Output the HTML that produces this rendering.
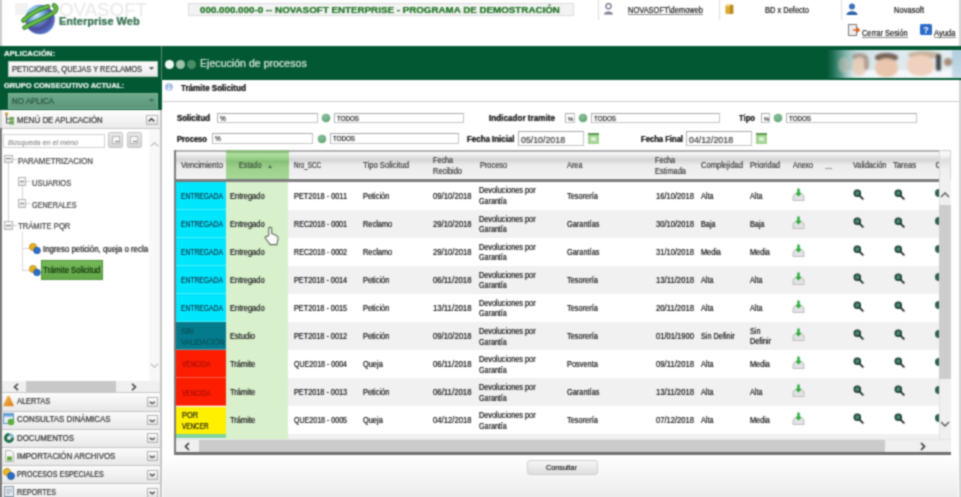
<!DOCTYPE html>
<html><head><meta charset="utf-8"><title>Novasoft</title>
<style>
*{box-sizing:border-box;margin:0;padding:0}
html,body{width:961px;height:497px;overflow:hidden;background:#fff;font-family:"Liberation Sans",sans-serif;color:#333}
.ab{position:absolute}
.t{position:absolute;white-space:nowrap;line-height:1;text-shadow:0 0 0.7px}
</style></head><body>
<svg width="0" height="0" style="position:absolute"><filter id="soft" x="0" y="0" width="100%" height="100%" color-interpolation-filters="sRGB"><feConvolveMatrix order="5" kernelMatrix="0.0002 0.0033 0.0081 0.0033 0.0002 0.0033 0.048 0.117 0.048 0.0033 0.0081 0.117 0.284 0.117 0.0081 0.0033 0.048 0.117 0.048 0.0033 0.0002 0.0033 0.0081 0.0033 0.0002" edgeMode="duplicate"/></filter></svg>
<div id="root" style="position:absolute;left:0;top:0;width:961px;height:497px;overflow:hidden;background:#fff;filter:url(#soft)">

<div class="ab" style="left:0;top:0;width:961px;height:46px;background:#fff"></div>
<div class="ab" style="left:0;top:0;width:1.5px;height:46px;background:#cfcfcf"></div>
<div class="ab" style="left:15px;top:3px;width:13px;height:12px;background:#f2f2f2"></div>
<svg class="ab" style="left:15px;top:0px" width="50" height="40" viewBox="0 0 50 40">
<defs><radialGradient id="gl" cx="0.35" cy="0.3" r="0.8"><stop offset="0" stop-color="#e8f4fc"/><stop offset="0.3" stop-color="#7ab4e4"/><stop offset="0.65" stop-color="#4a4a9c"/><stop offset="0.9" stop-color="#5a78c8"/><stop offset="1" stop-color="#9ad0f0"/></radialGradient></defs>
<circle cx="25" cy="19.5" r="14.8" fill="url(#gl)"/>
<path d="M8.5 20.5 C14 15 24 9 33 6.5" stroke="#2e7a22" stroke-width="4.6" fill="none" stroke-linecap="round"/>
<path d="M8.5 20.5 C14 15 24 9 33 6.5" stroke="#6cc04a" stroke-width="2.6" fill="none" stroke-linecap="round"/>
<path d="M9.5 27.5 C18 23 33 17 40 11.5 C42 9 41.5 6.5 39 5.5" stroke="#2e7a22" stroke-width="4.6" fill="none" stroke-linecap="round"/>
<path d="M9.5 27.5 C18 23 33 17 40 11.5 C42 9 41.5 6.5 39 5.5" stroke="#6cc04a" stroke-width="2.6" fill="none" stroke-linecap="round"/>
</svg>
<div class="ab" style="left:188px;top:3px;width:386px;height:13px;background:#f3f3f3;border:1px solid #dcdcdc"></div>
<div class="ab" style="left:598px;top:0;width:1px;height:20px;background:#dcdcdc"></div>
<div class="ab" style="left:719px;top:0;width:1px;height:20px;background:#dcdcdc"></div>
<div class="ab" style="left:841px;top:0;width:1px;height:20px;background:#dcdcdc"></div>
<svg class="ab" style="left:603px;top:3px" width="11" height="12" viewBox="0 0 11 12">
<circle cx="5.5" cy="3.2" r="2.6" fill="none" stroke="#6a6a80" stroke-width="1.3"/>
<path d="M1 11.5 C1 7.5 10 7.5 10 11.5 Z" fill="#7a7a90"/></svg>
<svg class="ab" style="left:725px;top:4px" width="9" height="11" viewBox="0 0 9 11">
<rect x="0.5" y="1" width="8" height="9" rx="1" fill="#d8a830"/><ellipse cx="4.5" cy="1.5" rx="4" ry="1.3" fill="#f0d070"/><rect x="5" y="1" width="3" height="9" fill="#b88820"/></svg>
<svg class="ab" style="left:846px;top:3px" width="12" height="12" viewBox="0 0 12 12">
<circle cx="6" cy="3.5" r="3" fill="#3a70b8"/><path d="M0.5 12 C0.5 7 11.5 7 11.5 12 Z" fill="#2a60a8"/></svg>
<svg class="ab" style="left:848px;top:24px" width="12" height="12" viewBox="0 0 12 12">
<rect x="0.5" y="0.5" width="8" height="11" fill="#eee" stroke="#777"/><path d="M5 6 H11 M8.5 3.5 L11 6 L8.5 8.5" stroke="#e06020" stroke-width="1.6" fill="none"/></svg>
<svg class="ab" style="left:920px;top:24px" width="12" height="11" viewBox="0 0 12 11">
<rect x="0" y="0" width="12" height="11" rx="1.5" fill="#2a6cc8"/><text x="6" y="9" font-size="9" font-family="Liberation Sans" font-weight="bold" fill="#fff" text-anchor="middle">?</text></svg>
<div class="ab" style="left:0;top:46px;width:161px;height:64px;background:#035834"></div>
<div class="ab" style="left:162px;top:46px;width:799px;height:34px;background:#035834"></div>
<div class="ab" style="left:826.5px;top:49.5px;width:134.5px;height:28px;overflow:hidden;background:linear-gradient(90deg,#035834 0px,#1a6a4c 5px,#4a9080 12px,#90bcb8 20px,#c8dee0 30px,#dce8ee 50px,#e4eef2 100%)">
<div class="ab" style="left:0;top:0;width:135px;height:28px;filter:blur(1.3px)">
<div class="ab" style="left:0;top:20px;width:135px;height:8px;background:linear-gradient(90deg,rgba(255,255,255,0) 15px,rgba(246,248,250,0.95) 35px)"></div>
<div class="ab" style="left:11px;top:7px;width:12px;height:16px;border-radius:50%;background:rgba(214,196,182,0.45)"></div>
<div class="ab" style="left:25px;top:3px;width:15px;height:7px;border-radius:50%;background:rgba(150,115,90,0.6)"></div>
<div class="ab" style="left:25px;top:7px;width:15px;height:19px;border-radius:50%;background:rgba(232,204,184,0.9)"></div>
<div class="ab" style="left:37px;top:6px;width:5px;height:14px;border-radius:40%;background:rgba(140,100,80,0.5)"></div>
<div class="ab" style="left:48px;top:3px;width:23px;height:8px;border-radius:50% 50% 35% 35%;background:rgba(96,72,58,0.85)"></div>
<div class="ab" style="left:48px;top:8px;width:23px;height:19px;border-radius:45%;background:rgba(234,196,170,0.95)"></div>
<div class="ab" style="left:81px;top:1px;width:32px;height:8px;border-radius:50%;background:rgba(190,160,130,0.75)"></div>
<div class="ab" style="left:80px;top:5px;width:27px;height:21px;border-radius:45%;background:rgba(240,208,188,0.95)"></div>
<div class="ab" style="left:109.5px;top:4px;width:4.5px;height:17px;border-radius:3px;background:rgba(40,40,44,0.85)"></div>
<div class="ab" style="left:117px;top:8px;width:8px;height:8px;border-radius:50%;background:rgba(150,115,90,0.8)"></div>
<div class="ab" style="left:125px;top:0;width:12px;height:28px;background:linear-gradient(#b0ccdc,#c8dce8)"></div>
</div></div>
<div class="ab" style="left:826.5px;top:77.5px;width:134.5px;height:2.5px;background:#035834"></div>
<div class="ab" style="left:165px;top:59.5px;width:9px;height:9px;border-radius:50%;background:#f4f8f4"></div>
<div class="ab" style="left:176px;top:59.5px;width:9px;height:9px;border-radius:50%;background:#9ec4ac"></div>
<div class="ab" style="left:187px;top:59.5px;width:9px;height:9px;border-radius:50%;background:#4a8c66"></div>
<div class="ab" style="left:8px;top:60.5px;width:149.5px;height:16px;background:linear-gradient(#fbfbfb,#eaeaea);border:1px solid #b8ccc0"></div>
<svg class="ab" style="left:149.3px;top:66.6px" width="5" height="3" viewBox="0 0 5 3"><path d="M0 0 H5 L2.5 3Z" fill="#555"/></svg>
<div class="ab" style="left:8px;top:92.5px;width:149.5px;height:16px;background:linear-gradient(#6ea98a,#5b9679);border:1px solid #82b49a"></div>
<svg class="ab" style="left:149.3px;top:98.8px" width="5" height="3" viewBox="0 0 5 3"><path d="M0 0 H5 L2.5 3Z" fill="#3a6a50"/></svg>
<div class="ab" style="left:160.5px;top:46px;width:1.6px;height:64px;background:#035834"></div>
<div class="ab" style="left:160.5px;top:46px;width:1.6px;height:34px;background:#5a8a70"></div>
<div class="ab" style="left:160px;top:110px;width:2px;height:387px;background:#c4c4c4"></div>
<div class="ab" style="left:2px;top:110px;width:158px;height:18.5px;background:linear-gradient(#fdfdfd,#ebebeb);border-bottom:1px solid #c8c8c8"></div>
<svg class="ab" style="left:4px;top:112px" width="11" height="13" viewBox="0 0 11 13">
<rect x="1" y="0.5" width="3" height="3" fill="#c8a040"/><path d="M2.5 3.5 V11 H6" stroke="#555" stroke-width="1" fill="none"/><path d="M2.5 7 H6" stroke="#555" stroke-width="1"/>
<rect x="5.5" y="5" width="4.5" height="3.5" fill="#6aa850"/><rect x="5.5" y="9" width="4.5" height="3.5" fill="#6aa850"/></svg>
<div class="ab" style="left:146px;top:115px;width:11.5px;height:9.5px;background:linear-gradient(#fff,#e2e2e2);border:1px solid #b4b4b4"></div>
<svg class="ab" style="left:148.3px;top:117.8px" width="7" height="4" viewBox="0 0 7 4"><path d="M0.7 3.3 L3.5 0.7 L6.3 3.3" stroke="#333" stroke-width="1.4" fill="none"/></svg>
<div class="ab" style="left:3px;top:134px;width:102px;height:14px;background:#fff;border:1px solid #d0d0d0"></div>
<div class="ab" style="left:108.4px;top:132.3px;width:15px;height:15.7px;border-radius:1.5px;background:linear-gradient(#e8e8e8,#d4d4d4);border:1px solid #c4c4c4"></div>
<div class="ab" style="left:111.9px;top:136px;width:8px;height:8px;background:#f8f8f8;border:1px solid #b8b8b8"></div>
<div class="ab" style="left:114.9px;top:141px;width:4px;height:1.2px;background:#777"></div>
<div class="ab" style="left:126.7px;top:132.3px;width:15px;height:15.7px;border-radius:1.5px;background:linear-gradient(#e8e8e8,#d4d4d4);border:1px solid #c4c4c4"></div>
<div class="ab" style="left:130.2px;top:136px;width:8px;height:8px;background:#f8f8f8;border:1px solid #b8b8b8"></div>
<div class="ab" style="left:133.2px;top:141px;width:4px;height:1.2px;background:#777"></div>
<div class="ab" style="left:148.7px;top:129px;width:11px;height:252px;background:#f8f8f8"></div>
<svg class="ab" style="left:150px;top:141.5px" width="9" height="5" viewBox="0 0 9 5"><path d="M0.7 4.3 L4.5 0.7 L8.3 4.3" stroke="#c0c0c0" stroke-width="1.2" fill="none"/></svg>
<svg class="ab" style="left:150px;top:362.5px" width="9" height="5" viewBox="0 0 9 5"><path d="M0.7 0.7 L4.5 4.3 L8.3 0.7" stroke="#c0c0c0" stroke-width="1.2" fill="none"/></svg>
<div class="ab" style="left:7.5px;top:163px;width:1px;height:59px;background:#d0d0d0"></div>
<div class="ab" style="left:21.5px;top:186px;width:1px;height:14px;background:#d8d8d8"></div>
<div class="ab" style="left:21.5px;top:232px;width:1px;height:38px;background:#e0d8d8"></div>
<div class="ab" style="left:21.5px;top:248px;width:8px;height:1px;background:#e0d0d0"></div>
<div class="ab" style="left:21.5px;top:270px;width:8px;height:1px;background:#e0d0d0"></div>
<div class="ab" style="left:4px;top:154.5px;width:8.5px;height:8.5px;border:1px solid #b4b4b4;background:linear-gradient(#fafafa,#e4e4e4)"></div>
<div class="ab" style="left:6px;top:158.2px;width:4.5px;height:1px;background:#777"></div>
<div class="ab" style="left:12.5px;top:158.5px;width:4px;height:1px;background:#ccc"></div>
<div class="ab" style="left:17.5px;top:177px;width:8.5px;height:8.5px;border:1px solid #b4b4b4;background:linear-gradient(#fafafa,#e4e4e4)"></div>
<div class="ab" style="left:19.5px;top:180.7px;width:4.5px;height:1px;background:#777"></div>
<div class="ab" style="left:26.0px;top:181px;width:4px;height:1px;background:#ccc"></div>
<div class="ab" style="left:17.5px;top:199px;width:8.5px;height:8.5px;border:1px solid #b4b4b4;background:linear-gradient(#fafafa,#e4e4e4)"></div>
<div class="ab" style="left:19.5px;top:202.7px;width:4.5px;height:1px;background:#777"></div>
<div class="ab" style="left:26.0px;top:203px;width:4px;height:1px;background:#ccc"></div>
<div class="ab" style="left:4px;top:221px;width:8.5px;height:8.5px;border:1px solid #b4b4b4;background:linear-gradient(#fafafa,#e4e4e4)"></div>
<div class="ab" style="left:6px;top:224.7px;width:4.5px;height:1px;background:#777"></div>
<div class="ab" style="left:12.5px;top:225px;width:4px;height:1px;background:#ccc"></div>
<svg class="ab" style="left:29px;top:243px" width="12" height="11" viewBox="0 0 12 11">
<circle cx="4" cy="4" r="3.5" fill="#e8b020" stroke="#b08010" stroke-width="0.8"/><circle cx="8" cy="7.5" r="3.3" fill="#2a70c8" stroke="#1a50a0" stroke-width="0.8"/></svg>
<div class="ab" style="left:41px;top:260px;width:61.6px;height:20px;background:linear-gradient(#74b858,#64a84a);border:1px solid #4e9436"></div>
<svg class="ab" style="left:29px;top:265px" width="12" height="11" viewBox="0 0 12 11">
<circle cx="4" cy="4" r="3.5" fill="#e8b020" stroke="#b08010" stroke-width="0.8"/><circle cx="8" cy="7.5" r="3.3" fill="#2a70c8" stroke="#1a50a0" stroke-width="0.8"/></svg>
<div class="ab" style="left:2px;top:381px;width:158px;height:11px;background:#f0f0f0"></div>
<div class="ab" style="left:25.5px;top:381px;width:90.5px;height:10.5px;background:#c8c8c8"></div>
<svg class="ab" style="left:13px;top:382.5px" width="6" height="8" viewBox="0 0 6 8"><path d="M5 0.8 L1.5 4 L5 7.2" stroke="#444" stroke-width="1.6" fill="none"/></svg>
<svg class="ab" style="left:131px;top:382.5px" width="6" height="8" viewBox="0 0 6 8"><path d="M1 0.8 L4.5 4 L1 7.2" stroke="#444" stroke-width="1.6" fill="none"/></svg>
<div class="ab" style="left:2px;top:391.5px;width:158px;height:1.5px;background:#c4c4c4"></div>
<div class="ab" style="left:2px;top:393.5px;width:158px;height:18.15px;background:linear-gradient(#fbfbfb,#e8e8e8);border-bottom:1.5px solid #c4c4c4"></div>
<div class="ab" style="left:147px;top:397.0px;width:10.5px;height:10px;background:linear-gradient(#fff,#e0e0e0);border:1px solid #b0b0b0"></div>
<svg class="ab" style="left:149px;top:400.5px" width="6.5" height="3.5" viewBox="0 0 6.5 3.5"><path d="M0.7 0.7 L3.25 2.8 L5.8 0.7" stroke="#444" stroke-width="1.3" fill="none"/></svg>
<div class="ab" style="left:2px;top:411.6px;width:158px;height:18.15px;background:linear-gradient(#fbfbfb,#e8e8e8);border-bottom:1.5px solid #c4c4c4"></div>
<div class="ab" style="left:147px;top:415.1px;width:10.5px;height:10px;background:linear-gradient(#fff,#e0e0e0);border:1px solid #b0b0b0"></div>
<svg class="ab" style="left:149px;top:418.65px" width="6.5" height="3.5" viewBox="0 0 6.5 3.5"><path d="M0.7 0.7 L3.25 2.8 L5.8 0.7" stroke="#444" stroke-width="1.3" fill="none"/></svg>
<div class="ab" style="left:2px;top:429.8px;width:158px;height:18.15px;background:linear-gradient(#fbfbfb,#e8e8e8);border-bottom:1.5px solid #c4c4c4"></div>
<div class="ab" style="left:147px;top:433.3px;width:10.5px;height:10px;background:linear-gradient(#fff,#e0e0e0);border:1px solid #b0b0b0"></div>
<svg class="ab" style="left:149px;top:436.8px" width="6.5" height="3.5" viewBox="0 0 6.5 3.5"><path d="M0.7 0.7 L3.25 2.8 L5.8 0.7" stroke="#444" stroke-width="1.3" fill="none"/></svg>
<div class="ab" style="left:2px;top:447.9px;width:158px;height:18.15px;background:linear-gradient(#fbfbfb,#e8e8e8);border-bottom:1.5px solid #c4c4c4"></div>
<div class="ab" style="left:147px;top:451.4px;width:10.5px;height:10px;background:linear-gradient(#fff,#e0e0e0);border:1px solid #b0b0b0"></div>
<svg class="ab" style="left:149px;top:454.95px" width="6.5" height="3.5" viewBox="0 0 6.5 3.5"><path d="M0.7 0.7 L3.25 2.8 L5.8 0.7" stroke="#444" stroke-width="1.3" fill="none"/></svg>
<div class="ab" style="left:2px;top:466.1px;width:158px;height:18.15px;background:linear-gradient(#fbfbfb,#e8e8e8);border-bottom:1.5px solid #c4c4c4"></div>
<div class="ab" style="left:147px;top:469.6px;width:10.5px;height:10px;background:linear-gradient(#fff,#e0e0e0);border:1px solid #b0b0b0"></div>
<svg class="ab" style="left:149px;top:473.1px" width="6.5" height="3.5" viewBox="0 0 6.5 3.5"><path d="M0.7 0.7 L3.25 2.8 L5.8 0.7" stroke="#444" stroke-width="1.3" fill="none"/></svg>
<div class="ab" style="left:2px;top:484.2px;width:158px;height:18.15px;background:linear-gradient(#fbfbfb,#e8e8e8);border-bottom:1.5px solid #c4c4c4"></div>
<div class="ab" style="left:147px;top:487.8px;width:10.5px;height:10px;background:linear-gradient(#fff,#e0e0e0);border:1px solid #b0b0b0"></div>
<svg class="ab" style="left:149px;top:491.25px" width="6.5" height="3.5" viewBox="0 0 6.5 3.5"><path d="M0.7 0.7 L3.25 2.8 L5.8 0.7" stroke="#444" stroke-width="1.3" fill="none"/></svg>
<div class="ab" style="left:0;top:110px;width:1.5px;height:18px;background:#d4d4d4"></div>
<div class="ab" style="left:0;top:128px;width:1.6px;height:369px;background:#7a7a7a"></div>
<svg class="ab" style="left:3px;top:395px" width="11" height="12" viewBox="0 0 11 12"><defs><linearGradient id="al" x1="0" y1="0" x2="1" y2="1"><stop offset="0" stop-color="#f8c050"/><stop offset="1" stop-color="#d87818"/></linearGradient></defs><path d="M4.3 1.5 Q5.5 -0.2 6.7 1.5 L10.5 10 Q10.8 11.3 9.5 11.3 H1.5 Q0.2 11.3 0.5 10 Z" fill="url(#al)"/></svg>
<svg class="ab" style="left:3px;top:413px" width="12" height="13" viewBox="0 0 12 13"><rect x="0.5" y="0.5" width="10" height="10" fill="#e4eef6" stroke="#5a90c8"/><rect x="0.5" y="0.5" width="10" height="3" fill="#6aa0d8"/><circle cx="8" cy="9" r="3.3" fill="#5ab038"/></svg>
<svg class="ab" style="left:3px;top:431.5px" width="12" height="12" viewBox="0 0 12 12"><path d="M6 1 A5 5 0 1 0 11 6 L8 6 A2 2 0 1 1 6 4 Z" fill="#1e6a4a"/><path d="M6 1 A5 5 0 0 1 11 6 L8 6 A2 2 0 0 0 6 4 Z" fill="#7ab8c8"/></svg>
<svg class="ab" style="left:5px;top:449.5px" width="9" height="12" viewBox="0 0 9 12"><path d="M0.5 0.5 H6 L8.5 3 V11.5 H0.5 Z" fill="#f6f6f6" stroke="#b4b4b4"/><rect x="2" y="6.5" width="5" height="4" fill="#5aa838"/></svg>
<svg class="ab" style="left:3px;top:467.5px" width="12" height="12" viewBox="0 0 12 12"><circle cx="4" cy="4" r="3.5" fill="#e8b828" stroke="#b88810" stroke-width="0.8"/><circle cx="8" cy="8" r="3.5" fill="#2a6cc8" stroke="#1a4c98" stroke-width="0.8"/></svg>
<svg class="ab" style="left:4px;top:485.5px" width="10" height="11" viewBox="0 0 10 11"><rect x="0.5" y="0.5" width="9" height="10" fill="#e8eef4" stroke="#8898a8"/><path d="M2 3.5 H8 M2 5.5 H8 M2 7.5 H6" stroke="#8898a8" stroke-width="0.8"/></svg>
<svg class="ab" style="left:164.5px;top:82.8px" width="8" height="8" viewBox="0 0 8 8"><circle cx="4" cy="4" r="3.8" fill="#9ab4e0"/><path d="M4 1 V6.5 M2 4.6 L4 7 L6 4.6" stroke="#e8f0fc" stroke-width="1.1" fill="none"/></svg>
<div class="ab" style="left:163px;top:100.5px;width:798px;height:1.5px;background:#c8c8c8"></div>
<div class="ab" style="left:959px;top:0;width:2px;height:46px;background:#d4d4d4"></div>
<div class="ab" style="left:958.5px;top:80px;width:2.5px;height:417px;background:#d4d4d4"></div>
<div class="ab" style="left:217px;top:113px;width:101px;height:10px;background:#fff;border:1px solid #c4c4c4;border-top-color:#a8a8a8;border-left-color:#b0b0b0"></div>
<div class="ab" style="left:322px;top:113.5px;width:8px;height:8px;border-radius:50%;background:radial-gradient(circle at 45% 40%,#8ac49a,#4a9262);box-shadow:0 0 0 0.8px #d8ecd8"></div>
<div class="ab" style="left:334px;top:113px;width:130px;height:10px;background:#fff;border:1px solid #c4c4c4;border-top-color:#a8a8a8;border-left-color:#b0b0b0"></div>
<div class="ab" style="left:565px;top:113px;width:10px;height:10px;background:#fff;border:1px solid #c4c4c4;border-top-color:#a8a8a8;border-left-color:#b0b0b0"></div>
<div class="ab" style="left:579px;top:113.5px;width:8px;height:8px;border-radius:50%;background:radial-gradient(circle at 45% 40%,#8ac49a,#4a9262);box-shadow:0 0 0 0.8px #d8ecd8"></div>
<div class="ab" style="left:591px;top:113px;width:129px;height:10px;background:#fff;border:1px solid #c4c4c4;border-top-color:#a8a8a8;border-left-color:#b0b0b0"></div>
<div class="ab" style="left:761px;top:113px;width:9px;height:10px;background:#fff;border:1px solid #c4c4c4;border-top-color:#a8a8a8;border-left-color:#b0b0b0"></div>
<div class="ab" style="left:774px;top:113.5px;width:8px;height:8px;border-radius:50%;background:radial-gradient(circle at 45% 40%,#8ac49a,#4a9262);box-shadow:0 0 0 0.8px #d8ecd8"></div>
<div class="ab" style="left:786px;top:113px;width:131px;height:10px;background:#fff;border:1px solid #c4c4c4;border-top-color:#a8a8a8;border-left-color:#b0b0b0"></div>
<div class="ab" style="left:212px;top:133px;width:101px;height:11px;background:#fff;border:1px solid #c4c4c4;border-top-color:#a8a8a8;border-left-color:#b0b0b0"></div>
<div class="ab" style="left:318px;top:134.5px;width:8px;height:8px;border-radius:50%;background:radial-gradient(circle at 45% 40%,#8ac49a,#4a9262);box-shadow:0 0 0 0.8px #d8ecd8"></div>
<div class="ab" style="left:330px;top:133px;width:129px;height:11px;background:#fff;border:1px solid #c4c4c4;border-top-color:#a8a8a8;border-left-color:#b0b0b0"></div>
<div class="ab" style="left:518px;top:131px;width:66px;height:15px;background:#fff;border:1px solid #c4c4c4;border-top-color:#a8a8a8;border-left-color:#b0b0b0"></div>
<div class="ab" style="left:588px;top:133px;width:11px;height:11px;background:#a4d494;border-top:2px solid #5a9a50"></div>
<div class="ab" style="left:591px;top:137px;width:5px;height:4px;background:#d8f0d0"></div>
<div class="ab" style="left:686px;top:131px;width:66px;height:15px;background:#fff;border:1px solid #c4c4c4;border-top-color:#a8a8a8;border-left-color:#b0b0b0"></div>
<div class="ab" style="left:756px;top:133px;width:11px;height:11px;background:#a4d494;border-top:2px solid #5a9a50"></div>
<div class="ab" style="left:759px;top:137px;width:5px;height:4px;background:#d8f0d0"></div>
<div class="ab" style="left:175px;top:149.5px;width:776px;height:305px;background:#fff;border-left:1px solid #c8c8c8;border-right:1px solid #c8c8c8"></div>
<div class="ab" style="left:175px;top:149.5px;width:776px;height:2.5px;background:#b0b0b0"></div>
<div class="ab" style="left:175px;top:152px;width:776px;height:26px;background:linear-gradient(#fdfdfd 0%,#d4d4d4 30%,#ececec 50%,#f2f2f2 100%)"></div>
<div class="ab" style="left:175px;top:178.8px;width:776px;height:3px;background:#7c7c7c"></div>
<div class="ab" style="left:225.5px;top:149.5px;width:63px;height:29.5px;background:linear-gradient(#8ab87c 0%,#8ab87c 8%,#b0e0a0 12%,#a0d490 25%,#88c078 40%,#9ccf8c 60%,#a6d896 100%)"></div>
<svg class="ab" style="left:267.8px;top:165px" width="4" height="3" viewBox="0 0 4 3"><path d="M0 3 L2 0 L4 3Z" fill="#4a6a4a"/></svg>
<div class="ab" style="left:938.5px;top:149.5px;width:12px;height:31.5px;background:linear-gradient(#f4f4f4 0%,#fafafa 10%,#dedede 30%,#efefef 60%,#f2f2f2 100%);border-left:1px solid #d8d8d8;border-right:1px solid #d4d4d4;border-top:1.5px solid #cfcfcf"></div>
<div class="ab" style="left:176px;top:181.70px;width:762.5px;height:28.1px;background:#ffffff"></div>
<div class="ab" style="left:175px;top:181.70px;width:50.5px;height:28.1px;background:#00e6fd;border-bottom:1px solid rgba(255,255,255,0.3)"></div>
<svg class="ab" style="left:792px;top:187.50px" width="13" height="13" viewBox="0 0 13 13">
<path d="M1 8 L2.5 6 H10.5 L12 8 V12.5 H1 Z" fill="#e2e2e2" stroke="#b4b4b4" stroke-width="0.8"/>
<path d="M6.5 0.5 V6.5" stroke="#2aa838" stroke-width="2.4"/><path d="M3.3 4.8 L6.5 8.6 L9.7 4.8 Z" fill="#2aa838"/></svg>
<svg class="ab" style="left:853px;top:188.50px" width="11" height="11" viewBox="0 0 11 11">
<circle cx="4.3" cy="4.3" r="3" fill="#4a8676" stroke="#1e3a32" stroke-width="1.5"/><path d="M6.6 6.6 L9.8 9.8" stroke="#1e2e2a" stroke-width="1.9" stroke-linecap="round"/></svg>
<svg class="ab" style="left:893.5px;top:188.50px" width="11" height="11" viewBox="0 0 11 11">
<circle cx="4.3" cy="4.3" r="3" fill="#4a8676" stroke="#1e3a32" stroke-width="1.5"/><path d="M6.6 6.6 L9.8 9.8" stroke="#1e2e2a" stroke-width="1.9" stroke-linecap="round"/></svg>
<div class="ab" style="left:934.5px;top:189.00px;width:4px;height:8px;border-radius:4px 0 0 4px;background:#2e5e50"></div>
<div class="ab" style="left:176px;top:209.80px;width:762.5px;height:28.1px;background:#f1f1f1"></div>
<div class="ab" style="left:175px;top:209.80px;width:50.5px;height:28.1px;background:#00e6fd;border-bottom:1px solid rgba(255,255,255,0.3)"></div>
<svg class="ab" style="left:792px;top:215.60px" width="13" height="13" viewBox="0 0 13 13">
<path d="M1 8 L2.5 6 H10.5 L12 8 V12.5 H1 Z" fill="#e2e2e2" stroke="#b4b4b4" stroke-width="0.8"/>
<path d="M6.5 0.5 V6.5" stroke="#2aa838" stroke-width="2.4"/><path d="M3.3 4.8 L6.5 8.6 L9.7 4.8 Z" fill="#2aa838"/></svg>
<svg class="ab" style="left:853px;top:216.60px" width="11" height="11" viewBox="0 0 11 11">
<circle cx="4.3" cy="4.3" r="3" fill="#4a8676" stroke="#1e3a32" stroke-width="1.5"/><path d="M6.6 6.6 L9.8 9.8" stroke="#1e2e2a" stroke-width="1.9" stroke-linecap="round"/></svg>
<svg class="ab" style="left:893.5px;top:216.60px" width="11" height="11" viewBox="0 0 11 11">
<circle cx="4.3" cy="4.3" r="3" fill="#4a8676" stroke="#1e3a32" stroke-width="1.5"/><path d="M6.6 6.6 L9.8 9.8" stroke="#1e2e2a" stroke-width="1.9" stroke-linecap="round"/></svg>
<div class="ab" style="left:934.5px;top:217.10px;width:4px;height:8px;border-radius:4px 0 0 4px;background:#2e5e50"></div>
<div class="ab" style="left:176px;top:237.90px;width:762.5px;height:28.1px;background:#ffffff"></div>
<div class="ab" style="left:175px;top:237.90px;width:50.5px;height:28.1px;background:#00e6fd;border-bottom:1px solid rgba(255,255,255,0.3)"></div>
<svg class="ab" style="left:792px;top:243.70px" width="13" height="13" viewBox="0 0 13 13">
<path d="M1 8 L2.5 6 H10.5 L12 8 V12.5 H1 Z" fill="#e2e2e2" stroke="#b4b4b4" stroke-width="0.8"/>
<path d="M6.5 0.5 V6.5" stroke="#2aa838" stroke-width="2.4"/><path d="M3.3 4.8 L6.5 8.6 L9.7 4.8 Z" fill="#2aa838"/></svg>
<svg class="ab" style="left:853px;top:244.70px" width="11" height="11" viewBox="0 0 11 11">
<circle cx="4.3" cy="4.3" r="3" fill="#4a8676" stroke="#1e3a32" stroke-width="1.5"/><path d="M6.6 6.6 L9.8 9.8" stroke="#1e2e2a" stroke-width="1.9" stroke-linecap="round"/></svg>
<svg class="ab" style="left:893.5px;top:244.70px" width="11" height="11" viewBox="0 0 11 11">
<circle cx="4.3" cy="4.3" r="3" fill="#4a8676" stroke="#1e3a32" stroke-width="1.5"/><path d="M6.6 6.6 L9.8 9.8" stroke="#1e2e2a" stroke-width="1.9" stroke-linecap="round"/></svg>
<div class="ab" style="left:934.5px;top:245.20px;width:4px;height:8px;border-radius:4px 0 0 4px;background:#2e5e50"></div>
<div class="ab" style="left:176px;top:266.00px;width:762.5px;height:28.1px;background:#f1f1f1"></div>
<div class="ab" style="left:175px;top:266.00px;width:50.5px;height:28.1px;background:#00e6fd;border-bottom:1px solid rgba(255,255,255,0.3)"></div>
<svg class="ab" style="left:792px;top:271.80px" width="13" height="13" viewBox="0 0 13 13">
<path d="M1 8 L2.5 6 H10.5 L12 8 V12.5 H1 Z" fill="#e2e2e2" stroke="#b4b4b4" stroke-width="0.8"/>
<path d="M6.5 0.5 V6.5" stroke="#2aa838" stroke-width="2.4"/><path d="M3.3 4.8 L6.5 8.6 L9.7 4.8 Z" fill="#2aa838"/></svg>
<svg class="ab" style="left:853px;top:272.80px" width="11" height="11" viewBox="0 0 11 11">
<circle cx="4.3" cy="4.3" r="3" fill="#4a8676" stroke="#1e3a32" stroke-width="1.5"/><path d="M6.6 6.6 L9.8 9.8" stroke="#1e2e2a" stroke-width="1.9" stroke-linecap="round"/></svg>
<svg class="ab" style="left:893.5px;top:272.80px" width="11" height="11" viewBox="0 0 11 11">
<circle cx="4.3" cy="4.3" r="3" fill="#4a8676" stroke="#1e3a32" stroke-width="1.5"/><path d="M6.6 6.6 L9.8 9.8" stroke="#1e2e2a" stroke-width="1.9" stroke-linecap="round"/></svg>
<div class="ab" style="left:934.5px;top:273.30px;width:4px;height:8px;border-radius:4px 0 0 4px;background:#2e5e50"></div>
<div class="ab" style="left:176px;top:294.10px;width:762.5px;height:28.1px;background:#ffffff"></div>
<div class="ab" style="left:175px;top:294.10px;width:50.5px;height:28.1px;background:#00e6fd;border-bottom:1px solid rgba(255,255,255,0.3)"></div>
<svg class="ab" style="left:792px;top:299.90px" width="13" height="13" viewBox="0 0 13 13">
<path d="M1 8 L2.5 6 H10.5 L12 8 V12.5 H1 Z" fill="#e2e2e2" stroke="#b4b4b4" stroke-width="0.8"/>
<path d="M6.5 0.5 V6.5" stroke="#2aa838" stroke-width="2.4"/><path d="M3.3 4.8 L6.5 8.6 L9.7 4.8 Z" fill="#2aa838"/></svg>
<svg class="ab" style="left:853px;top:300.90px" width="11" height="11" viewBox="0 0 11 11">
<circle cx="4.3" cy="4.3" r="3" fill="#4a8676" stroke="#1e3a32" stroke-width="1.5"/><path d="M6.6 6.6 L9.8 9.8" stroke="#1e2e2a" stroke-width="1.9" stroke-linecap="round"/></svg>
<svg class="ab" style="left:893.5px;top:300.90px" width="11" height="11" viewBox="0 0 11 11">
<circle cx="4.3" cy="4.3" r="3" fill="#4a8676" stroke="#1e3a32" stroke-width="1.5"/><path d="M6.6 6.6 L9.8 9.8" stroke="#1e2e2a" stroke-width="1.9" stroke-linecap="round"/></svg>
<div class="ab" style="left:934.5px;top:301.40px;width:4px;height:8px;border-radius:4px 0 0 4px;background:#2e5e50"></div>
<div class="ab" style="left:176px;top:322.20px;width:762.5px;height:28.1px;background:#f1f1f1"></div>
<div class="ab" style="left:175px;top:322.20px;width:50.5px;height:28.1px;background:#037b8c;border-bottom:1px solid rgba(255,255,255,0.3)"></div>
<svg class="ab" style="left:792px;top:328.00px" width="13" height="13" viewBox="0 0 13 13">
<path d="M1 8 L2.5 6 H10.5 L12 8 V12.5 H1 Z" fill="#e2e2e2" stroke="#b4b4b4" stroke-width="0.8"/>
<path d="M6.5 0.5 V6.5" stroke="#2aa838" stroke-width="2.4"/><path d="M3.3 4.8 L6.5 8.6 L9.7 4.8 Z" fill="#2aa838"/></svg>
<svg class="ab" style="left:853px;top:329.00px" width="11" height="11" viewBox="0 0 11 11">
<circle cx="4.3" cy="4.3" r="3" fill="#4a8676" stroke="#1e3a32" stroke-width="1.5"/><path d="M6.6 6.6 L9.8 9.8" stroke="#1e2e2a" stroke-width="1.9" stroke-linecap="round"/></svg>
<svg class="ab" style="left:893.5px;top:329.00px" width="11" height="11" viewBox="0 0 11 11">
<circle cx="4.3" cy="4.3" r="3" fill="#4a8676" stroke="#1e3a32" stroke-width="1.5"/><path d="M6.6 6.6 L9.8 9.8" stroke="#1e2e2a" stroke-width="1.9" stroke-linecap="round"/></svg>
<div class="ab" style="left:934.5px;top:329.50px;width:4px;height:8px;border-radius:4px 0 0 4px;background:#2e5e50"></div>
<div class="ab" style="left:176px;top:350.30px;width:762.5px;height:28.1px;background:#ffffff"></div>
<div class="ab" style="left:175px;top:350.30px;width:50.5px;height:28.1px;background:#ff1d00;border-bottom:1px solid rgba(255,255,255,0.3)"></div>
<svg class="ab" style="left:792px;top:356.10px" width="13" height="13" viewBox="0 0 13 13">
<path d="M1 8 L2.5 6 H10.5 L12 8 V12.5 H1 Z" fill="#e2e2e2" stroke="#b4b4b4" stroke-width="0.8"/>
<path d="M6.5 0.5 V6.5" stroke="#2aa838" stroke-width="2.4"/><path d="M3.3 4.8 L6.5 8.6 L9.7 4.8 Z" fill="#2aa838"/></svg>
<svg class="ab" style="left:853px;top:357.10px" width="11" height="11" viewBox="0 0 11 11">
<circle cx="4.3" cy="4.3" r="3" fill="#4a8676" stroke="#1e3a32" stroke-width="1.5"/><path d="M6.6 6.6 L9.8 9.8" stroke="#1e2e2a" stroke-width="1.9" stroke-linecap="round"/></svg>
<svg class="ab" style="left:893.5px;top:357.10px" width="11" height="11" viewBox="0 0 11 11">
<circle cx="4.3" cy="4.3" r="3" fill="#4a8676" stroke="#1e3a32" stroke-width="1.5"/><path d="M6.6 6.6 L9.8 9.8" stroke="#1e2e2a" stroke-width="1.9" stroke-linecap="round"/></svg>
<div class="ab" style="left:934.5px;top:357.60px;width:4px;height:8px;border-radius:4px 0 0 4px;background:#2e5e50"></div>
<div class="ab" style="left:176px;top:378.40px;width:762.5px;height:28.1px;background:#f1f1f1"></div>
<div class="ab" style="left:175px;top:378.40px;width:50.5px;height:28.1px;background:#ff1d00;border-bottom:1px solid rgba(255,255,255,0.3)"></div>
<svg class="ab" style="left:792px;top:384.20px" width="13" height="13" viewBox="0 0 13 13">
<path d="M1 8 L2.5 6 H10.5 L12 8 V12.5 H1 Z" fill="#e2e2e2" stroke="#b4b4b4" stroke-width="0.8"/>
<path d="M6.5 0.5 V6.5" stroke="#2aa838" stroke-width="2.4"/><path d="M3.3 4.8 L6.5 8.6 L9.7 4.8 Z" fill="#2aa838"/></svg>
<svg class="ab" style="left:853px;top:385.20px" width="11" height="11" viewBox="0 0 11 11">
<circle cx="4.3" cy="4.3" r="3" fill="#4a8676" stroke="#1e3a32" stroke-width="1.5"/><path d="M6.6 6.6 L9.8 9.8" stroke="#1e2e2a" stroke-width="1.9" stroke-linecap="round"/></svg>
<svg class="ab" style="left:893.5px;top:385.20px" width="11" height="11" viewBox="0 0 11 11">
<circle cx="4.3" cy="4.3" r="3" fill="#4a8676" stroke="#1e3a32" stroke-width="1.5"/><path d="M6.6 6.6 L9.8 9.8" stroke="#1e2e2a" stroke-width="1.9" stroke-linecap="round"/></svg>
<div class="ab" style="left:934.5px;top:385.70px;width:4px;height:8px;border-radius:4px 0 0 4px;background:#2e5e50"></div>
<div class="ab" style="left:176px;top:406.50px;width:762.5px;height:28.1px;background:#ffffff"></div>
<div class="ab" style="left:175px;top:406.50px;width:50.5px;height:28.1px;background:#fff000;border-bottom:1px solid rgba(255,255,255,0.3)"></div>
<svg class="ab" style="left:792px;top:412.30px" width="13" height="13" viewBox="0 0 13 13">
<path d="M1 8 L2.5 6 H10.5 L12 8 V12.5 H1 Z" fill="#e2e2e2" stroke="#b4b4b4" stroke-width="0.8"/>
<path d="M6.5 0.5 V6.5" stroke="#2aa838" stroke-width="2.4"/><path d="M3.3 4.8 L6.5 8.6 L9.7 4.8 Z" fill="#2aa838"/></svg>
<svg class="ab" style="left:853px;top:413.30px" width="11" height="11" viewBox="0 0 11 11">
<circle cx="4.3" cy="4.3" r="3" fill="#4a8676" stroke="#1e3a32" stroke-width="1.5"/><path d="M6.6 6.6 L9.8 9.8" stroke="#1e2e2a" stroke-width="1.9" stroke-linecap="round"/></svg>
<svg class="ab" style="left:893.5px;top:413.30px" width="11" height="11" viewBox="0 0 11 11">
<circle cx="4.3" cy="4.3" r="3" fill="#4a8676" stroke="#1e3a32" stroke-width="1.5"/><path d="M6.6 6.6 L9.8 9.8" stroke="#1e2e2a" stroke-width="1.9" stroke-linecap="round"/></svg>
<div class="ab" style="left:934.5px;top:413.80px;width:4px;height:8px;border-radius:4px 0 0 4px;background:#2e5e50"></div>
<div class="ab" style="left:176px;top:434.1px;width:762.5px;height:4.5px;background:#f1f1f1"></div>
<div class="ab" style="left:175px;top:434.1px;width:50.5px;height:4.3px;background:#7fd49c"></div>
<div class="ab" style="left:225.5px;top:181.70px;width:62.5px;height:256.90px;background:#d8f0cc"></div>
<div class="ab" style="left:938.5px;top:180px;width:12px;height:259px;background:#f0f0f0;border-left:1px solid #e0e0e0"></div>
<div class="ab" style="left:939px;top:205px;width:11.5px;height:174px;background:#cdcdcd"></div>
<svg class="ab" style="left:940px;top:192px" width="10" height="6" viewBox="0 0 10 6"><path d="M1 5 L5 1 L9 5" stroke="#555" stroke-width="1.4" fill="none"/></svg>
<svg class="ab" style="left:940px;top:421px" width="10" height="6" viewBox="0 0 10 6"><path d="M1 1 L5 5 L9 1" stroke="#555" stroke-width="1.4" fill="none"/></svg>
<div class="ab" style="left:175px;top:439px;width:776px;height:13px;background:#f0f0f0;border-top:1px solid #e4e4e4"></div>
<div class="ab" style="left:199px;top:440px;width:685.5px;height:12px;background:#cbcbcb"></div>
<svg class="ab" style="left:184px;top:442px" width="6" height="9" viewBox="0 0 6 9"><path d="M5 1 L1.5 4.5 L5 8" stroke="#333" stroke-width="1.6" fill="none"/></svg>
<svg class="ab" style="left:920px;top:442px" width="6" height="9" viewBox="0 0 6 9"><path d="M1 1 L4.5 4.5 L1 8" stroke="#333" stroke-width="1.6" fill="none"/></svg>
<div class="ab" style="left:175px;top:452px;width:776px;height:2.5px;background:#6e6e6e"></div>
<div class="ab" style="left:174px;top:150px;width:1.8px;height:304.5px;background:#7a7a7a"></div>
<div class="ab" style="left:163px;top:455px;width:795px;height:42px;background:linear-gradient(#ffffff,#ececec)"></div>
<div class="ab" style="left:527px;top:460px;width:70.5px;height:14.5px;border-radius:3px;background:linear-gradient(#f6f6f6,#dedede);border:1px solid #cfcfcf"></div>
<div id="fg" style="position:absolute;left:0;top:0;width:961px;height:497px;overflow:hidden">
<div class="t" style="left:59.4px;top:1.3px;font-size:18px;color:#ebebeb;transform:scaleX(1.039);transform-origin:0 0;">OVASOFT</div>
<div class="t" style="left:58.8px;top:16.3px;font-size:11.4px;font-weight:bold;color:#3d7657;transform:scaleX(0.968);transform-origin:0 0;">Enterprise Web</div>
<div class="t" style="left:200.0px;top:5.1px;font-size:9.5px;font-weight:bold;color:#2a7a2e;transform:scaleX(1.030);transform-origin:0 0;">000.000.000-0 -- NOVASOFT ENTERPRISE - PROGRAMA DE DEMOSTRACIÓN</div>
<div class="t" style="left:628.0px;top:6.3px;font-size:8.5px;color:#333;transform:scaleX(0.879);transform-origin:0 0;text-decoration:underline;text-decoration-color:#888">NOVASOFT\demoweb</div>
<div class="t" style="left:765.0px;top:6.3px;font-size:8.5px;color:#333;transform:scaleX(0.879);transform-origin:0 0;">BD x Defecto</div>
<div class="t" style="left:894.0px;top:6.3px;font-size:8.5px;color:#333;transform:scaleX(0.894);transform-origin:0 0;">Novasoft</div>
<div class="t" style="left:862.0px;top:29.3px;font-size:8.5px;color:#333;transform:scaleX(0.872);transform-origin:0 0;text-decoration:underline;text-decoration-color:#888">Cerrar Sesión</div>
<div class="t" style="left:934.0px;top:29.3px;font-size:8.5px;color:#333;transform:scaleX(0.898);transform-origin:0 0;text-decoration:underline;text-decoration-color:#888">Ayuda</div>
<div class="t" style="left:200.2px;top:58.4px;font-size:11px;color:#cfe0d4;transform:scaleX(0.964);transform-origin:0 0;">Ejecución de procesos</div>
<div class="t" style="left:4.0px;top:49.8px;font-size:8px;font-weight:bold;color:#e4eee8;transform:scaleX(0.973);transform-origin:0 0;">APLICACIÓN:</div>
<div class="t" style="left:12.0px;top:64.1px;font-size:9.5px;color:#4a4a4a;transform:scaleX(0.786);transform-origin:0 0;">PETICIONES, QUEJAS Y RECLAMOS</div>
<div class="t" style="left:4.0px;top:81.5px;font-size:8px;font-weight:bold;color:#e4eee8;transform:scaleX(0.940);transform-origin:0 0;">GRUPO CONSECUTIVO ACTUAL:</div>
<div class="t" style="left:12.0px;top:96.1px;font-size:9.5px;color:#2c5a40;transform:scaleX(0.837);transform-origin:0 0;">NO APLICA</div>
<div class="t" style="left:16.7px;top:115.2px;font-size:9.5px;color:#444;transform:scaleX(0.829);transform-origin:0 0;">MENÚ DE APLICACIÓN</div>
<div class="t" style="left:7.6px;top:138.6px;font-size:7.5px;color:#a0a0a0;transform:scaleX(0.959);transform-origin:0 0;font-style:italic">Búsqueda en el menú</div>
<div class="t" style="left:18.0px;top:156.8px;font-size:9px;color:#555;transform:scaleX(0.874);transform-origin:0 0;">PARAMETRIZACION</div>
<div class="t" style="left:32.2px;top:178.6px;font-size:9px;color:#555;transform:scaleX(0.834);transform-origin:0 0;">USUARIOS</div>
<div class="t" style="left:32.0px;top:200.5px;font-size:9px;color:#555;transform:scaleX(0.809);transform-origin:0 0;">GENERALES</div>
<div class="t" style="left:18.0px;top:222.1px;font-size:9px;color:#555;transform:scaleX(0.852);transform-origin:0 0;">TRÁMITE PQR</div>
<div class="t" style="left:43.0px;top:245.0px;font-size:8.5px;color:#333;transform:scaleX(0.926);transform-origin:0 0;">Ingreso petición, queja o recla</div>
<div class="t" style="left:43.3px;top:266.3px;font-size:8.5px;color:#163a10;transform:scaleX(0.910);transform-origin:0 0;">Trámite Solicitud</div>
<div class="t" style="left:16.6px;top:397.3px;font-size:9px;color:#444;transform:scaleX(0.826);transform-origin:0 0;">ALERTAS</div>
<div class="t" style="left:16.6px;top:415.4px;font-size:9px;color:#444;transform:scaleX(0.882);transform-origin:0 0;">CONSULTAS DINÁMICAS</div>
<div class="t" style="left:16.6px;top:433.6px;font-size:9px;color:#444;transform:scaleX(0.879);transform-origin:0 0;">DOCUMENTOS</div>
<div class="t" style="left:16.6px;top:451.7px;font-size:9px;color:#444;transform:scaleX(0.881);transform-origin:0 0;">IMPORTACIÓN ARCHIVOS</div>
<div class="t" style="left:16.6px;top:469.9px;font-size:9px;color:#444;transform:scaleX(0.792);transform-origin:0 0;">PROCESOS ESPECIALES</div>
<div class="t" style="left:16.6px;top:488.0px;font-size:9px;color:#444;transform:scaleX(0.792);transform-origin:0 0;">REPORTES</div>
<div class="t" style="left:181.0px;top:83.8px;font-size:8.5px;font-weight:bold;color:#222;transform:scaleX(0.946);transform-origin:0 0;">Trámite Solicitud</div>
<div class="t" style="left:177.0px;top:114.3px;font-size:8.5px;font-weight:bold;color:#222;transform:scaleX(0.920);transform-origin:0 0;">Solicitud</div>
<div class="t" style="left:220.0px;top:115.9px;font-size:6.5px;color:#444;">%</div>
<div class="t" style="left:337.0px;top:115.9px;font-size:6.5px;color:#333;transform:scaleX(0.957);transform-origin:0 0;">TODOS</div>
<div class="t" style="left:489.0px;top:114.3px;font-size:8.5px;font-weight:bold;color:#222;transform:scaleX(0.957);transform-origin:0 0;">Indicador tramite</div>
<div class="t" style="left:568.0px;top:116.1px;font-size:6px;color:#444;">%</div>
<div class="t" style="left:594.0px;top:115.9px;font-size:6.5px;color:#333;transform:scaleX(0.957);transform-origin:0 0;">TODOS</div>
<div class="t" style="left:739.0px;top:114.3px;font-size:8.5px;font-weight:bold;color:#222;transform:scaleX(0.900);transform-origin:0 0;">Tipo</div>
<div class="t" style="left:764.0px;top:116.1px;font-size:6px;color:#444;">%</div>
<div class="t" style="left:789.0px;top:115.9px;font-size:6.5px;color:#333;transform:scaleX(0.957);transform-origin:0 0;">TODOS</div>
<div class="t" style="left:177.0px;top:135.3px;font-size:8.5px;font-weight:bold;color:#222;transform:scaleX(0.894);transform-origin:0 0;">Proceso</div>
<div class="t" style="left:215.0px;top:136.4px;font-size:6.5px;color:#444;">%</div>
<div class="t" style="left:333.0px;top:136.4px;font-size:6.5px;color:#333;transform:scaleX(0.957);transform-origin:0 0;">TODOS</div>
<div class="t" style="left:467.0px;top:135.3px;font-size:8.5px;font-weight:bold;color:#222;transform:scaleX(0.931);transform-origin:0 0;">Fecha Inicial</div>
<div class="t" style="left:521.0px;top:134.9px;font-size:9.5px;color:#555;transform:scaleX(0.926);transform-origin:0 0;">05/10/2018</div>
<div class="t" style="left:641.0px;top:135.3px;font-size:8.5px;font-weight:bold;color:#222;transform:scaleX(0.898);transform-origin:0 0;">Fecha Final</div>
<div class="t" style="left:689.0px;top:134.9px;font-size:9.5px;color:#555;transform:scaleX(0.926);transform-origin:0 0;">04/12/2018</div>
<div class="t" style="left:181.0px;top:161.1px;font-size:9px;color:#4a4a4a;transform:scaleX(0.857);transform-origin:0 0;">Vencimiento</div>
<div class="t" style="left:238.8px;top:161.3px;font-size:9px;color:#3e5a3e;transform:scaleX(0.803);transform-origin:0 0;">Estado</div>
<div class="t" style="left:293.7px;top:161.1px;font-size:9px;color:#4a4a4a;transform:scaleX(0.701);transform-origin:0 0;">Nro_SCC</div>
<div class="t" style="left:362.5px;top:161.1px;font-size:9px;color:#4a4a4a;transform:scaleX(0.857);transform-origin:0 0;">Tipo Solicitud</div>
<div class="t" style="left:433.0px;top:156.1px;font-size:9px;color:#4a4a4a;transform:scaleX(0.800);transform-origin:0 0;">Fecha</div>
<div class="t" style="left:433.0px;top:167.1px;font-size:9px;color:#4a4a4a;transform:scaleX(0.828);transform-origin:0 0;">Recibido</div>
<div class="t" style="left:479.5px;top:161.1px;font-size:9px;color:#4a4a4a;transform:scaleX(0.818);transform-origin:0 0;">Proceso</div>
<div class="t" style="left:567.0px;top:161.1px;font-size:9px;color:#4a4a4a;transform:scaleX(0.815);transform-origin:0 0;">Area</div>
<div class="t" style="left:655.0px;top:156.1px;font-size:9px;color:#4a4a4a;transform:scaleX(0.800);transform-origin:0 0;">Fecha</div>
<div class="t" style="left:655.0px;top:167.1px;font-size:9px;color:#4a4a4a;transform:scaleX(0.826);transform-origin:0 0;">Estimada</div>
<div class="t" style="left:701.0px;top:161.1px;font-size:9px;color:#4a4a4a;transform:scaleX(0.840);transform-origin:0 0;">Complejidad</div>
<div class="t" style="left:750.0px;top:161.1px;font-size:9px;color:#4a4a4a;transform:scaleX(0.833);transform-origin:0 0;">Prioridad</div>
<div class="t" style="left:792.6px;top:161.1px;font-size:9px;color:#4a4a4a;transform:scaleX(0.784);transform-origin:0 0;">Anexo</div>
<div class="t" style="left:824.7px;top:162.1px;font-size:9px;color:#4a4a4a;transform:scaleX(0.933);transform-origin:0 0;">...</div>
<div class="t" style="left:852.7px;top:161.1px;font-size:9px;color:#4a4a4a;transform:scaleX(0.815);transform-origin:0 0;">Validación</div>
<div class="t" style="left:893.0px;top:161.1px;font-size:9px;color:#4a4a4a;transform:scaleX(0.851);transform-origin:0 0;">Tareas</div>
<div class="ab" style="left:935px;top:158px;width:3.5px;height:14px;overflow:hidden"><div class="t" style="left:0.4px;top:3.1px;font-size:9px;color:#4a4a4a;text-shadow:0 0 0.7px">C</div></div>
<div class="t" style="left:181.3px;top:191.8px;font-size:8.5px;color:#0e4a60;transform:scaleX(0.794);transform-origin:0 0;">ENTREGADA</div>
<div class="t" style="left:229.7px;top:191.5px;font-size:9px;color:#2c2c2c;transform:scaleX(0.833);transform-origin:0 0;">Entregado</div>
<div class="t" style="left:294.2px;top:191.5px;font-size:9px;color:#2c2c2c;transform:scaleX(0.817);transform-origin:0 0;">PET2018 - 0011</div>
<div class="t" style="left:362.9px;top:191.5px;font-size:9px;color:#2c2c2c;transform:scaleX(0.822);transform-origin:0 0;">Petición</div>
<div class="t" style="left:433.0px;top:191.5px;font-size:9px;color:#2c2c2c;transform:scaleX(0.855);transform-origin:0 0;">09/10/2018</div>
<div class="t" style="left:479.2px;top:186.4px;font-size:9px;color:#2c2c2c;transform:scaleX(0.814);transform-origin:0 0;">Devoluciones por</div>
<div class="t" style="left:479.2px;top:197.0px;font-size:9px;color:#2c2c2c;transform:scaleX(0.794);transform-origin:0 0;">Garantía</div>
<div class="t" style="left:566.8px;top:191.5px;font-size:9px;color:#2c2c2c;transform:scaleX(0.822);transform-origin:0 0;">Tesorería</div>
<div class="t" style="left:655.5px;top:191.5px;font-size:9px;color:#2c2c2c;transform:scaleX(0.844);transform-origin:0 0;">16/10/2018</div>
<div class="t" style="left:700.6px;top:191.5px;font-size:9px;color:#2c2c2c;transform:scaleX(0.811);transform-origin:0 0;">Alta</div>
<div class="t" style="left:750.0px;top:191.5px;font-size:9px;color:#2c2c2c;transform:scaleX(0.811);transform-origin:0 0;">Alta</div>
<div class="t" style="left:181.3px;top:219.9px;font-size:8.5px;color:#0e4a60;transform:scaleX(0.794);transform-origin:0 0;">ENTREGADA</div>
<div class="t" style="left:229.7px;top:219.6px;font-size:9px;color:#2c2c2c;transform:scaleX(0.833);transform-origin:0 0;">Entregado</div>
<div class="t" style="left:294.2px;top:219.6px;font-size:9px;color:#2c2c2c;transform:scaleX(0.791);transform-origin:0 0;">REC2018 - 0001</div>
<div class="t" style="left:362.9px;top:219.6px;font-size:9px;color:#2c2c2c;transform:scaleX(0.822);transform-origin:0 0;">Reclamo</div>
<div class="t" style="left:433.0px;top:219.6px;font-size:9px;color:#2c2c2c;transform:scaleX(0.855);transform-origin:0 0;">29/10/2018</div>
<div class="t" style="left:479.2px;top:214.5px;font-size:9px;color:#2c2c2c;transform:scaleX(0.814);transform-origin:0 0;">Devoluciones por</div>
<div class="t" style="left:479.2px;top:225.1px;font-size:9px;color:#2c2c2c;transform:scaleX(0.794);transform-origin:0 0;">Garantía</div>
<div class="t" style="left:566.8px;top:219.6px;font-size:9px;color:#2c2c2c;transform:scaleX(0.822);transform-origin:0 0;">Garantías</div>
<div class="t" style="left:655.5px;top:219.6px;font-size:9px;color:#2c2c2c;transform:scaleX(0.844);transform-origin:0 0;">30/10/2018</div>
<div class="t" style="left:700.6px;top:219.6px;font-size:9px;color:#2c2c2c;transform:scaleX(0.811);transform-origin:0 0;">Baja</div>
<div class="t" style="left:750.0px;top:219.6px;font-size:9px;color:#2c2c2c;transform:scaleX(0.811);transform-origin:0 0;">Baja</div>
<div class="t" style="left:181.3px;top:248.0px;font-size:8.5px;color:#0e4a60;transform:scaleX(0.794);transform-origin:0 0;">ENTREGADA</div>
<div class="t" style="left:229.7px;top:247.7px;font-size:9px;color:#2c2c2c;transform:scaleX(0.833);transform-origin:0 0;">Entregado</div>
<div class="t" style="left:294.2px;top:247.7px;font-size:9px;color:#2c2c2c;transform:scaleX(0.791);transform-origin:0 0;">REC2018 - 0002</div>
<div class="t" style="left:362.9px;top:247.7px;font-size:9px;color:#2c2c2c;transform:scaleX(0.822);transform-origin:0 0;">Reclamo</div>
<div class="t" style="left:433.0px;top:247.7px;font-size:9px;color:#2c2c2c;transform:scaleX(0.855);transform-origin:0 0;">29/10/2018</div>
<div class="t" style="left:479.2px;top:242.6px;font-size:9px;color:#2c2c2c;transform:scaleX(0.814);transform-origin:0 0;">Devoluciones por</div>
<div class="t" style="left:479.2px;top:253.2px;font-size:9px;color:#2c2c2c;transform:scaleX(0.794);transform-origin:0 0;">Garantía</div>
<div class="t" style="left:566.8px;top:247.7px;font-size:9px;color:#2c2c2c;transform:scaleX(0.822);transform-origin:0 0;">Garantías</div>
<div class="t" style="left:655.5px;top:247.7px;font-size:9px;color:#2c2c2c;transform:scaleX(0.844);transform-origin:0 0;">31/10/2018</div>
<div class="t" style="left:700.6px;top:247.7px;font-size:9px;color:#2c2c2c;transform:scaleX(0.811);transform-origin:0 0;">Media</div>
<div class="t" style="left:750.0px;top:247.7px;font-size:9px;color:#2c2c2c;transform:scaleX(0.811);transform-origin:0 0;">Media</div>
<div class="t" style="left:181.3px;top:276.1px;font-size:8.5px;color:#0e4a60;transform:scaleX(0.794);transform-origin:0 0;">ENTREGADA</div>
<div class="t" style="left:229.7px;top:275.8px;font-size:9px;color:#2c2c2c;transform:scaleX(0.833);transform-origin:0 0;">Entregado</div>
<div class="t" style="left:294.2px;top:275.8px;font-size:9px;color:#2c2c2c;transform:scaleX(0.809);transform-origin:0 0;">PET2018 - 0014</div>
<div class="t" style="left:362.9px;top:275.8px;font-size:9px;color:#2c2c2c;transform:scaleX(0.822);transform-origin:0 0;">Petición</div>
<div class="t" style="left:433.0px;top:275.8px;font-size:9px;color:#2c2c2c;transform:scaleX(0.868);transform-origin:0 0;">06/11/2018</div>
<div class="t" style="left:479.2px;top:270.7px;font-size:9px;color:#2c2c2c;transform:scaleX(0.814);transform-origin:0 0;">Devoluciones por</div>
<div class="t" style="left:479.2px;top:281.3px;font-size:9px;color:#2c2c2c;transform:scaleX(0.794);transform-origin:0 0;">Garantía</div>
<div class="t" style="left:566.8px;top:275.8px;font-size:9px;color:#2c2c2c;transform:scaleX(0.822);transform-origin:0 0;">Tesorería</div>
<div class="t" style="left:655.5px;top:275.8px;font-size:9px;color:#2c2c2c;transform:scaleX(0.856);transform-origin:0 0;">13/11/2018</div>
<div class="t" style="left:700.6px;top:275.8px;font-size:9px;color:#2c2c2c;transform:scaleX(0.811);transform-origin:0 0;">Alta</div>
<div class="t" style="left:750.0px;top:275.8px;font-size:9px;color:#2c2c2c;transform:scaleX(0.811);transform-origin:0 0;">Alta</div>
<div class="t" style="left:181.3px;top:304.2px;font-size:8.5px;color:#0e4a60;transform:scaleX(0.794);transform-origin:0 0;">ENTREGADA</div>
<div class="t" style="left:229.7px;top:303.9px;font-size:9px;color:#2c2c2c;transform:scaleX(0.833);transform-origin:0 0;">Entregado</div>
<div class="t" style="left:294.2px;top:303.9px;font-size:9px;color:#2c2c2c;transform:scaleX(0.809);transform-origin:0 0;">PET2018 - 0015</div>
<div class="t" style="left:362.9px;top:303.9px;font-size:9px;color:#2c2c2c;transform:scaleX(0.822);transform-origin:0 0;">Petición</div>
<div class="t" style="left:433.0px;top:303.9px;font-size:9px;color:#2c2c2c;transform:scaleX(0.868);transform-origin:0 0;">13/11/2018</div>
<div class="t" style="left:479.2px;top:298.8px;font-size:9px;color:#2c2c2c;transform:scaleX(0.814);transform-origin:0 0;">Devoluciones por</div>
<div class="t" style="left:479.2px;top:309.4px;font-size:9px;color:#2c2c2c;transform:scaleX(0.794);transform-origin:0 0;">Garantía</div>
<div class="t" style="left:566.8px;top:303.9px;font-size:9px;color:#2c2c2c;transform:scaleX(0.822);transform-origin:0 0;">Tesorería</div>
<div class="t" style="left:655.5px;top:303.9px;font-size:9px;color:#2c2c2c;transform:scaleX(0.856);transform-origin:0 0;">20/11/2018</div>
<div class="t" style="left:700.6px;top:303.9px;font-size:9px;color:#2c2c2c;transform:scaleX(0.811);transform-origin:0 0;">Alta</div>
<div class="t" style="left:750.0px;top:303.9px;font-size:9px;color:#2c2c2c;transform:scaleX(0.811);transform-origin:0 0;">Alta</div>
<div class="t" style="left:181.0px;top:327.0px;font-size:8.5px;color:#0d5560;transform:scaleX(0.871);transform-origin:0 0;">SIN</div>
<div class="t" style="left:181.0px;top:337.6px;font-size:8.5px;color:#0d5560;transform:scaleX(0.855);transform-origin:0 0;">VALIDACION</div>
<div class="t" style="left:229.7px;top:332.0px;font-size:9px;color:#2c2c2c;transform:scaleX(0.833);transform-origin:0 0;">Estudio</div>
<div class="t" style="left:294.2px;top:332.0px;font-size:9px;color:#2c2c2c;transform:scaleX(0.809);transform-origin:0 0;">PET2018 - 0012</div>
<div class="t" style="left:362.9px;top:332.0px;font-size:9px;color:#2c2c2c;transform:scaleX(0.822);transform-origin:0 0;">Petición</div>
<div class="t" style="left:433.0px;top:332.0px;font-size:9px;color:#2c2c2c;transform:scaleX(0.855);transform-origin:0 0;">09/10/2018</div>
<div class="t" style="left:479.2px;top:326.9px;font-size:9px;color:#2c2c2c;transform:scaleX(0.814);transform-origin:0 0;">Devoluciones por</div>
<div class="t" style="left:479.2px;top:337.5px;font-size:9px;color:#2c2c2c;transform:scaleX(0.794);transform-origin:0 0;">Garantía</div>
<div class="t" style="left:566.8px;top:332.0px;font-size:9px;color:#2c2c2c;transform:scaleX(0.822);transform-origin:0 0;">Tesorería</div>
<div class="t" style="left:655.5px;top:332.0px;font-size:9px;color:#2c2c2c;transform:scaleX(0.844);transform-origin:0 0;">01/01/1900</div>
<div class="t" style="left:700.6px;top:332.0px;font-size:9px;color:#2c2c2c;transform:scaleX(0.811);transform-origin:0 0;">Sin Definir</div>
<div class="t" style="left:750.0px;top:326.7px;font-size:9px;color:#2c2c2c;transform:scaleX(0.811);transform-origin:0 0;">Sin</div>
<div class="t" style="left:750.0px;top:337.3px;font-size:9px;color:#2c2c2c;transform:scaleX(0.811);transform-origin:0 0;">Definir</div>
<div class="t" style="left:182.0px;top:360.4px;font-size:8.5px;color:#b01008;transform:scaleX(0.754);transform-origin:0 0;">VENCIDA</div>
<div class="t" style="left:229.7px;top:360.1px;font-size:9px;color:#2c2c2c;transform:scaleX(0.833);transform-origin:0 0;">Trámite</div>
<div class="t" style="left:294.2px;top:360.1px;font-size:9px;color:#2c2c2c;transform:scaleX(0.785);transform-origin:0 0;">QUE2018 - 0004</div>
<div class="t" style="left:362.9px;top:360.1px;font-size:9px;color:#2c2c2c;transform:scaleX(0.822);transform-origin:0 0;">Queja</div>
<div class="t" style="left:433.0px;top:360.1px;font-size:9px;color:#2c2c2c;transform:scaleX(0.868);transform-origin:0 0;">06/11/2018</div>
<div class="t" style="left:479.2px;top:355.0px;font-size:9px;color:#2c2c2c;transform:scaleX(0.814);transform-origin:0 0;">Devoluciones por</div>
<div class="t" style="left:479.2px;top:365.6px;font-size:9px;color:#2c2c2c;transform:scaleX(0.794);transform-origin:0 0;">Garantía</div>
<div class="t" style="left:566.8px;top:360.1px;font-size:9px;color:#2c2c2c;transform:scaleX(0.822);transform-origin:0 0;">Posventa</div>
<div class="t" style="left:655.5px;top:360.1px;font-size:9px;color:#2c2c2c;transform:scaleX(0.856);transform-origin:0 0;">09/11/2018</div>
<div class="t" style="left:700.6px;top:360.1px;font-size:9px;color:#2c2c2c;transform:scaleX(0.811);transform-origin:0 0;">Alta</div>
<div class="t" style="left:750.0px;top:360.1px;font-size:9px;color:#2c2c2c;transform:scaleX(0.811);transform-origin:0 0;">Media</div>
<div class="t" style="left:182.0px;top:388.5px;font-size:8.5px;color:#b01008;transform:scaleX(0.754);transform-origin:0 0;">VENCIDA</div>
<div class="t" style="left:229.7px;top:388.2px;font-size:9px;color:#2c2c2c;transform:scaleX(0.833);transform-origin:0 0;">Trámite</div>
<div class="t" style="left:294.2px;top:388.2px;font-size:9px;color:#2c2c2c;transform:scaleX(0.809);transform-origin:0 0;">PET2018 - 0013</div>
<div class="t" style="left:362.9px;top:388.2px;font-size:9px;color:#2c2c2c;transform:scaleX(0.822);transform-origin:0 0;">Petición</div>
<div class="t" style="left:433.0px;top:388.2px;font-size:9px;color:#2c2c2c;transform:scaleX(0.868);transform-origin:0 0;">06/11/2018</div>
<div class="t" style="left:479.2px;top:383.1px;font-size:9px;color:#2c2c2c;transform:scaleX(0.814);transform-origin:0 0;">Devoluciones por</div>
<div class="t" style="left:479.2px;top:393.7px;font-size:9px;color:#2c2c2c;transform:scaleX(0.794);transform-origin:0 0;">Garantía</div>
<div class="t" style="left:566.8px;top:388.2px;font-size:9px;color:#2c2c2c;transform:scaleX(0.822);transform-origin:0 0;">Garantías</div>
<div class="t" style="left:655.5px;top:388.2px;font-size:9px;color:#2c2c2c;transform:scaleX(0.856);transform-origin:0 0;">13/11/2018</div>
<div class="t" style="left:700.6px;top:388.2px;font-size:9px;color:#2c2c2c;transform:scaleX(0.811);transform-origin:0 0;">Alta</div>
<div class="t" style="left:750.0px;top:388.2px;font-size:9px;color:#2c2c2c;transform:scaleX(0.811);transform-origin:0 0;">Alta</div>
<div class="t" style="left:181.5px;top:411.3px;font-size:8.5px;color:#3a3a10;transform:scaleX(0.871);transform-origin:0 0;">POR</div>
<div class="t" style="left:181.5px;top:421.9px;font-size:8.5px;color:#3a3a10;transform:scaleX(0.748);transform-origin:0 0;">VENCER</div>
<div class="t" style="left:229.7px;top:416.3px;font-size:9px;color:#2c2c2c;transform:scaleX(0.833);transform-origin:0 0;">Trámite</div>
<div class="t" style="left:294.2px;top:416.3px;font-size:9px;color:#2c2c2c;transform:scaleX(0.785);transform-origin:0 0;">QUE2018 - 0005</div>
<div class="t" style="left:362.9px;top:416.3px;font-size:9px;color:#2c2c2c;transform:scaleX(0.822);transform-origin:0 0;">Queja</div>
<div class="t" style="left:433.0px;top:416.3px;font-size:9px;color:#2c2c2c;transform:scaleX(0.855);transform-origin:0 0;">04/12/2018</div>
<div class="t" style="left:479.2px;top:411.2px;font-size:9px;color:#2c2c2c;transform:scaleX(0.814);transform-origin:0 0;">Devoluciones por</div>
<div class="t" style="left:479.2px;top:421.8px;font-size:9px;color:#2c2c2c;transform:scaleX(0.794);transform-origin:0 0;">Garantía</div>
<div class="t" style="left:566.8px;top:416.3px;font-size:9px;color:#2c2c2c;transform:scaleX(0.822);transform-origin:0 0;">Tesorería</div>
<div class="t" style="left:655.5px;top:416.3px;font-size:9px;color:#2c2c2c;transform:scaleX(0.844);transform-origin:0 0;">07/12/2018</div>
<div class="t" style="left:700.6px;top:416.3px;font-size:9px;color:#2c2c2c;transform:scaleX(0.811);transform-origin:0 0;">Alta</div>
<div class="t" style="left:750.0px;top:416.3px;font-size:9px;color:#2c2c2c;transform:scaleX(0.811);transform-origin:0 0;">Media</div>
<svg class="ab" style="left:264px;top:226px" width="16" height="20" viewBox="0 0 16 20">
<path d="M4.7 9.5 V2 Q6.2 0.6 7.7 2 V7.6 L12 9.2 Q14.4 10.2 14 13 L12.8 18.6 H6.2 L1.2 12 Q0.8 10 2.8 10.6 Z" fill="#fbfbfb" stroke="#5a6a5a" stroke-width="1.1" stroke-linejoin="round"/></svg>
<div class="t" style="left:546.0px;top:463.5px;font-size:8px;color:#333;transform:scaleX(0.905);transform-origin:0 0;">Consultar</div>
</div></div></body></html>
